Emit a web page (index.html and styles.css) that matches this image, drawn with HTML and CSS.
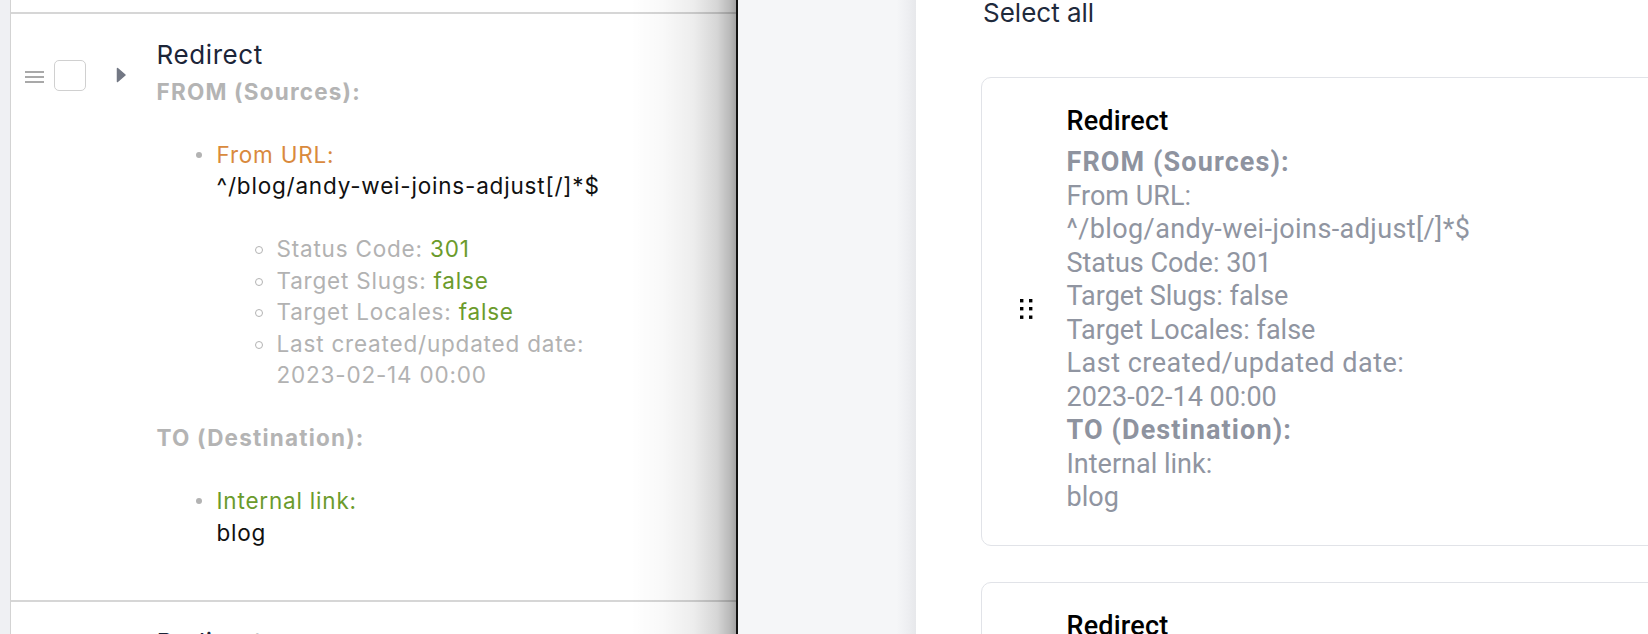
FILE: index.html
```html
<!DOCTYPE html>
<html lang="en">
<head>
<meta charset="utf-8">
<title>Redirects</title>
<link rel="stylesheet" href="styles.css">
</head>
<body>
<div class="screen">
  <section class="old">
    <div class="gutter"></div>
    <div class="old-main">
      <div class="old-top"></div>
      <div class="item">
        <div class="controls">
          <svg class="hamburger" width="19" height="12" viewBox="0 0 19 12"><path d="M0 1h19M0 6h19M0 11h19" stroke="#8d8d8d" stroke-width="1.3" fill="none"/></svg>
          <span class="checkbox"></span>
          <svg class="caret" width="10" height="16" viewBox="0 0 10 16"><path d="M1.5 1.5 L9 8 L1.5 14.5 Z" fill="#737884" stroke="#737884" stroke-width="1.5" stroke-linejoin="round"/></svg>
        </div>
        <div class="old-body">
          <h3 class="old-title">Redirect</h3>
          <p class="old-label">FROM (Sources):</p>
          <ul class="old-list">
            <li><span class="orange">From URL:</span><br><span class="val">^/blog/andy-wei-joins-adjust[/]*$</span>
              <ul class="old-sub">
                <li>Status Code: <span class="green">301</span></li>
                <li>Target Slugs: <span class="green">false</span></li>
                <li>Target Locales: <span class="green">false</span></li>
                <li>Last created/updated date:<br>2023-02-14 00:00</li>
              </ul>
            </li>
          </ul>
          <p class="old-label">TO (Destination):</p>
          <ul class="old-list">
            <li><span class="green">Internal link:</span><br><span class="val">blog</span></li>
          </ul>
        </div>
      </div>
      <div class="item">
        <div class="controls">
          <svg class="hamburger" width="19" height="12" viewBox="0 0 19 12"><path d="M0 1h19M0 6h19M0 11h19" stroke="#8d8d8d" stroke-width="1.3" fill="none"/></svg>
          <span class="checkbox"></span>
          <svg class="caret" width="10" height="16" viewBox="0 0 10 16"><path d="M1.5 1.5 L9 8 L1.5 14.5 Z" fill="#737884" stroke="#737884" stroke-width="1.5" stroke-linejoin="round"/></svg>
        </div>
        <div class="old-body">
          <h3 class="old-title">Redirect</h3>
        </div>
      </div>
    </div>
  </section>
  <div class="divider"></div>
  <div class="strip"></div>
  <section class="new">
    <div class="select-all">Select all</div>
    <div class="card">
      <svg class="drag" width="13" height="21" viewBox="0 0 13 21"><g fill="#000"><rect x="0" y="0" width="3.4" height="3.4"/><rect x="9" y="0" width="3.4" height="3.4"/><rect x="0" y="8" width="3.4" height="3.4"/><rect x="9" y="8" width="3.4" height="3.4"/><rect x="0" y="16.5" width="3.4" height="3.4"/><rect x="9" y="16.5" width="3.4" height="3.4"/></g></svg>
      <div class="card-body">
        <h3 class="card-title">Redirect</h3>
        <div class="card-label">FROM (Sources):</div>
        <div>From URL:</div>
        <div class="card-path">^/blog/andy-wei-joins-adjust[/]*$</div>
        <div>Status Code: 301</div>
        <div>Target Slugs: false</div>
        <div>Target Locales: false</div>
        <div class="card-wide">Last created/updated date:</div>
        <div>2023-02-14 00:00</div>
        <div class="card-label">TO (Destination):</div>
        <div>Internal link:</div>
        <div>blog</div>
      </div>
    </div>
    <div class="card">
      <svg class="drag" width="13" height="21" viewBox="0 0 13 21"><g fill="#000"><rect x="0" y="0" width="3.4" height="3.4"/><rect x="9" y="0" width="3.4" height="3.4"/><rect x="0" y="8" width="3.4" height="3.4"/><rect x="9" y="8" width="3.4" height="3.4"/><rect x="0" y="16.5" width="3.4" height="3.4"/><rect x="9" y="16.5" width="3.4" height="3.4"/></g></svg>
      <div class="card-body">
        <h3 class="card-title">Redirect</h3>
        <div class="card-label">FROM (Sources):</div>
        <div>From URL:</div>
      </div>
    </div>
  </section>
</div>
</body>
</html>
```

FILE: styles.css
```css
html, body {
  margin: 0;
  padding: 0;
  height: 634px;
  overflow: hidden;
  background: #ffffff;
}

.screen {
  display: flex;
  width: 1648px;
  height: 634px;
  overflow: hidden;
}

/* ---------- left (old) panel ---------- */
.old {
  position: relative;
  flex: none;
  width: 736px;
  display: flex;
  overflow: hidden;
  background: #ffffff;
}

.old::after {
  content: "";
  position: absolute;
  top: 0;
  right: 0;
  bottom: 0;
  width: 106px;
  pointer-events: none;
  background: linear-gradient(to right,
    rgba(0, 0, 0, 0) 0%,
    rgba(0, 0, 0, 0.025) 30%,
    rgba(0, 0, 0, 0.07) 60%,
    rgba(0, 0, 0, 0.16) 82%,
    rgba(0, 0, 0, 0.27) 94%,
    rgba(0, 0, 0, 0.36) 100%);
}

.gutter {
  flex: none;
  width: 10px;
  background: #eff0f3;
  border-right: 1.5px solid #d3d3d3;
}

.old-main {
  flex: 1;
  font-family: Inter, "Noto Sans", sans-serif;
}

.old-top {
  height: 12px;
  border-bottom: 2px solid #d6d6d6;
}

.item {
  display: flex;
  align-items: flex-start;
  padding-left: 14px;
  border-bottom: 2px solid #d6d6d6;
}

.controls {
  flex: none;
  width: 131.5px;
  height: 31px;
  margin-top: 46px;
  display: flex;
  align-items: center;
}

.hamburger {
  flex: none;
  margin-right: 10px;
  margin-top: 3px;
}

.checkbox {
  flex: none;
  width: 32px;
  height: 31px;
  box-sizing: border-box;
  border: 1.5px solid #d0d0d0;
  border-radius: 5px;
  margin-right: 29.5px;
}

.caret {
  flex: none;
  margin-top: -2px;
}

.old-body {
  padding-top: 19.5px;
  padding-bottom: 20.5px;
  font-size: 22.5px;
  line-height: 31.5px;
  letter-spacing: 0.8px;
  color: #b2b2b2;
}

.old-title {
  margin: 0;
  font-size: 26px;
  line-height: 42px;
  font-weight: 400;
  letter-spacing: 0.6px;
  color: #1c2538;
}

.old-label {
  margin: 0;
  font-weight: 700;
  letter-spacing: 1.2px;
  color: #b4b4b4;
}

.old-list {
  list-style: none;
  margin: 31.5px 0;
  padding-left: 60px;
}

.old-list > li::before {
  content: "";
  display: inline-block;
  width: 6px;
  height: 6px;
  border-radius: 50%;
  background: #b3b3b3;
  margin-left: -21px;
  margin-right: 15px;
  vertical-align: 5px;
}

.old-sub {
  list-style: none;
  margin: 31.5px 0 0;
  padding-left: 60px;
}

.old-sub > li::before {
  content: "";
  display: inline-block;
  box-sizing: border-box;
  width: 8px;
  height: 8px;
  border-radius: 50%;
  border: 1.2px solid #b3b3b3;
  margin-left: -22px;
  margin-right: 14px;
  vertical-align: 3px;
}

.orange { color: #d98a3d; }
.green { color: #6b9b2c; }
.val { color: #111111; }

/* ---------- divider + strip ---------- */
.divider {
  flex: none;
  width: 2px;
  background: #111111;
}

.strip {
  flex: none;
  width: 178px;
  background: linear-gradient(to right, #f5f6f8 0%, #f5f6f8 89%, #eeeff2 95%, #e7e8eb 100%);
}

/* ---------- right (new) panel ---------- */
.new {
  flex: 1;
  overflow: hidden;
  padding-left: 65px;
}

.select-all {
  padding-left: 2px;
  font-family: Inter, "Noto Sans", sans-serif;
  font-size: 26px;
  line-height: 26px;
  color: #1f2a3c;
  margin-bottom: 51px;
}

.card {
  width: 760px;
  box-sizing: border-box;
  display: flex;
  align-items: center;
  border: 1.5px solid #e1e3e8;
  border-radius: 10px;
  padding: 27px 0 30.5px 37.5px;
  margin-bottom: 36px;
  font-family: Roboto, "Noto Sans", sans-serif;
  font-size: 27px;
  line-height: 33.5px;
  color: #9095a1;
}

.drag {
  flex: none;
  margin-right: 34px;
}

.card-body {
  flex: 1;
}

.card-title {
  margin: 0 0 7.5px;
  font-size: 27px;
  line-height: 33.5px;
  font-weight: 500;
  letter-spacing: 0.2px;
  color: #000000;
}

.card-label {
  font-weight: 700;
  letter-spacing: 1.1px;
  color: #8e939f;
}

.card-path {
  letter-spacing: 0.4px;
}

.card-wide {
  letter-spacing: 0.5px;
}
```
